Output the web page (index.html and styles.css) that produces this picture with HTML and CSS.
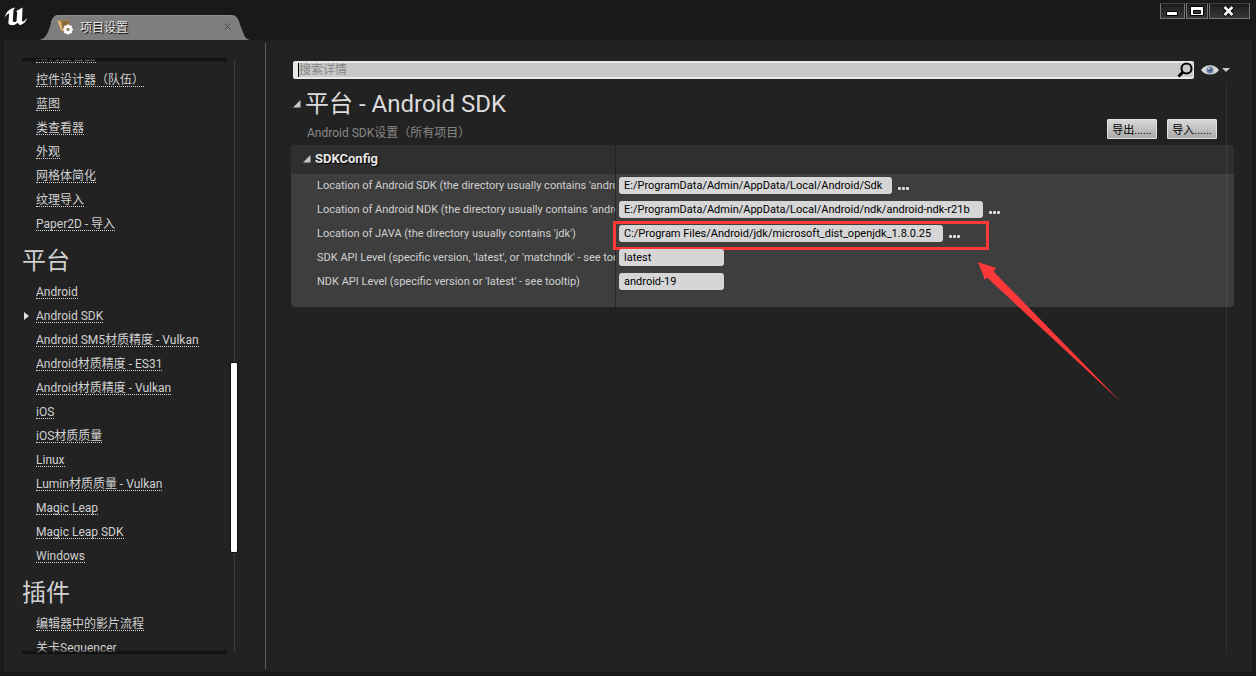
FILE: index.html
```html
<!DOCTYPE html>
<html lang="zh-CN">
<head>
    <meta charset="UTF-8">
    <meta name="viewport" content="width=device-width, initial-scale=1.0">
    <title>项目设置</title>
    <link rel="stylesheet" href="styles.css">
</head>
<body>
    <header class="titlebar">
        <svg class="logo" width="24" height="22" viewBox="0 0 24 22" aria-hidden="true">
            <path d="M0.800 11.500C1.500 6.500 5.500 2.500 11 1.500L9.500 4L8.800 14.500C8.800 16.200 10.500 16.600 12.500 15.200L13.200 6L12 5.200L18.500 1.500L18 14.500C18 15.800 18.800 15.800 19.800 15.200L23.200 12C22 15.500 20 17.800 16 19.300L13.500 16.800C11.500 18.800 9.500 20 5.500 18.800L4.300 17.200L5.200 7.500C3.500 7.800 2 9 0.800 11.500Z" fill="#fff"/>
        </svg>
        <div class="tab">
            <svg class="tab-shape" width="212" height="25" viewBox="0 0 212 25" aria-hidden="true">
                <path d="M0 25C6 24 8 20 10.500 13C13 5 14 0.500 19 0.500H192C198 0.500 199 4 202 12C205 20 206 24 211 25Z" fill="#7e7e7e"/>
                <path d="M12 8C14 3 15 0.500 19 0.500H192C197 0.500 198 3 200 8" fill="none" stroke="#8c8c8c"/>
            </svg>
            <svg class="tab-icon" width="17" height="16" viewBox="0 0 17 16" aria-hidden="true">
                <path d="M0.500 1H12L13 9L7 14L4 12Z" fill="#a9824d"/>
                <path d="M0.500 1L4 3L5.500 13L3 9Z" fill="#e0b878"/>
                <path d="M5 2H11L12 6L6 9Z" fill="#8a683b"/>
                <path d="M6 9L9 6L11 7L7 13Z" fill="#8c9a3c"/>
                <circle cx="11" cy="10.500" r="3" fill="none" stroke="#fff" stroke-width="2.500"/>
                <path d="M11 5.500V7M11 14V15.500M6 10.500H7.500M14.500 10.500H16M7.500 7L8.500 8M13.500 13L14.500 14M14.500 7L13.500 8M8.500 13L7.500 14" stroke="#fff" stroke-width="2"/>
            </svg>
            <span class="tab-title">项目设置</span>
            <button class="tab-close" type="button" aria-label="关闭标签页">
                <svg width="7" height="7" viewBox="0 0 7 7"><path d="M0.500 0.500L6.500 6.500M6.500 0.500L0.500 6.500" stroke="#4a4a4a"/></svg>
            </button>
        </div>
        <div class="window-buttons">
            <button type="button" aria-label="最小化">
                <svg width="23" height="14" viewBox="0 0 23 14"><path d="M5.500 7.500H16.500V11.500H5.500Z" fill="#fff" stroke="#000"/></svg>
            </button>
            <button type="button" aria-label="最大化">
                <svg width="20" height="14" viewBox="0 0 20 14"><path d="M3.500 2.500H16.500V11.500H3.500Z" fill="#fff" stroke="#000"/><path d="M6.500 6.500H13.500V9.500H6.500Z" fill="#333" stroke="#000"/></svg>
            </button>
            <button type="button" aria-label="关闭">
                <svg width="39" height="14" viewBox="0 0 39 14"><path d="M14 3L23 11.500M23 3L14 11.500" stroke="#000" stroke-width="4"/><path d="M14.500 3L22.500 11M22.500 3L14.500 11" stroke="#fff" stroke-width="2.500"/></svg>
            </button>
        </div>
    </header>

    <main class="window">
        <aside class="sidebar">
            <nav class="nav" aria-label="设置分类">
                <ul class="nav-list">
                    <li><a href="#">结构查看器</a></li>
                    <li><a href="#">控件设计器（队伍）</a></li>
                    <li><a href="#">蓝图</a></li>
                    <li><a href="#">类查看器</a></li>
                    <li><a href="#">外观</a></li>
                    <li><a href="#">网格体简化</a></li>
                    <li><a href="#">纹理导入</a></li>
                    <li><a href="#">Paper2D - 导入</a></li>
                </ul>
                <h2>平台</h2>
                <ul class="nav-list">
                    <li><a href="#">Android</a></li>
                    <li class="current"><a href="#" aria-current="page">Android SDK</a></li>
                    <li><a href="#">Android SM5材质精度 - Vulkan</a></li>
                    <li><a href="#">Android材质精度 - ES31</a></li>
                    <li><a href="#">Android材质精度 - Vulkan</a></li>
                    <li><a href="#">iOS</a></li>
                    <li><a href="#">iOS材质质量</a></li>
                    <li><a href="#">Linux</a></li>
                    <li><a href="#">Lumin材质质量 - Vulkan</a></li>
                    <li><a href="#">Magic Leap</a></li>
                    <li><a href="#">Magic Leap SDK</a></li>
                    <li><a href="#">Windows</a></li>
                </ul>
                <h2>插件</h2>
                <ul class="nav-list">
                    <li><a href="#">编辑器中的影片流程</a></li>
                    <li><a href="#">关卡Sequencer</a></li>
                </ul>
            </nav>
            <div class="scrollbar"><div class="thumb"></div></div>
        </aside>

        <section class="details">
            <div class="search-row">
                <div class="search-box">
                    <input type="text" placeholder="搜索详情" aria-label="搜索详情">
                    <svg width="16" height="16" viewBox="0 0 16 16" aria-hidden="true"><circle cx="9.500" cy="6.500" r="5" fill="none" stroke="#000" stroke-width="2"/><path d="M6 10L1.500 14.500" stroke="#000" stroke-width="3"/></svg>
                </div>
                <button class="view-options" type="button" aria-label="视图选项">
                    <svg width="30" height="12" viewBox="0 0 30 12">
                        <path d="M0 6C4 -0.500 14 -0.500 18 6C14 12 4 12 0 6Z" fill="#d8d8d8"/>
                        <circle cx="9" cy="6" r="3.500" fill="#6a81a6"/>
                        <circle cx="9" cy="6" r="1.500" fill="#445473"/>
                        <circle cx="8" cy="4.500" r="1" fill="#dde6f5"/>
                        <path d="M21 4H29L25 8Z" fill="#c8c8c8"/>
                    </svg>
                </button>
            </div>

            <div class="page-head">
                <div class="page-title">
                    <h1><svg width="8" height="8" viewBox="0 0 8 8" aria-hidden="true"><path d="M7.500 0V7.500H0Z" fill="#c8c8c8"/></svg>平台 - Android SDK</h1>
                    <p>Android SDK设置（所有项目）</p>
                </div>
                <div class="actions">
                    <button type="button">导出......</button>
                    <button type="button">导入......</button>
                </div>
            </div>

            <div class="panel">
                <div class="row row-head">
                    <h3><svg width="8" height="8" viewBox="0 0 8 8" aria-hidden="true"><path d="M7.500 0V7.500H0Z" fill="#c8c8c8"/></svg>SDKConfig</h3>
                    <div class="value"></div>
                </div>
                <div class="row">
                    <label for="sdk">Location of Android SDK (the directory usually contains 'android-sdk')</label>
                    <div class="value"><input id="sdk" class="path-sdk" type="text" value="E:/ProgramData/Admin/AppData/Local/Android/Sdk"><button class="browse" type="button" aria-label="浏览"><i></i><i></i><i></i></button></div>
                </div>
                <div class="row">
                    <label for="ndk">Location of Android NDK (the directory usually contains 'android-ndk')</label>
                    <div class="value"><input id="ndk" class="path-ndk" type="text" value="E:/ProgramData/Admin/AppData/Local/Android/ndk/android-ndk-r21b"><button class="browse" type="button" aria-label="浏览"><i></i><i></i><i></i></button></div>
                </div>
                <div class="row">
                    <label for="java">Location of JAVA (the directory usually contains 'jdk')</label>
                    <div class="value">
                        <input id="java" class="path-java" type="text" value="C:/Program Files/Android/jdk/microsoft_dist_openjdk_1.8.0.25"><button class="browse" type="button" aria-label="浏览"><i></i><i></i><i></i></button>
                        <div class="highlight"></div>
                        <svg class="arrow" width="144" height="142" viewBox="0 0 144 142" aria-hidden="true"><path d="M0 0L18 6L15.500 9.500L143 140L9 15.500L7 18Z" fill="#fd3838"/></svg>
                    </div>
                </div>
                <div class="row">
                    <label for="sdk-api">SDK API Level (specific version, 'latest', or 'matchndk' - see tooltip)</label>
                    <div class="value"><input id="sdk-api" type="text" value="latest"></div>
                </div>
                <div class="row">
                    <label for="ndk-api">NDK API Level (specific version or 'latest' - see tooltip)</label>
                    <div class="value"><input id="ndk-api" type="text" value="android-19"></div>
                </div>
                <div class="row row-end">
                    <span></span>
                    <div class="value"></div>
                </div>
            </div>
        </section>
    </main>
</body>
</html>
```

FILE: styles.css
```css
*,
*::before,
*::after {
    box-sizing: border-box;
}

body {
    margin: 0;
    height: 100vh;
    display: flex;
    flex-direction: column;
    background: #191919;
    color: #d0d0d0;
    font-family: Roboto, "Noto Sans CJK SC", sans-serif;
    font-size: 12px;
    overflow: hidden;
}

h1, h2, h3, p, ul {
    margin: 0;
    padding: 0;
    font-weight: normal;
}

button {
    padding: 0;
    border: 0;
    background: none;
    color: inherit;
    font: inherit;
}

svg {
    display: block;
    flex: none;
}

/* title bar */
.titlebar {
    display: flex;
    flex: none;
    height: 40px;
    padding: 0 6px 0 4px;
    background: #191919;
}

.logo {
    margin-top: 6px;
}

.tab {
    position: relative;
    display: flex;
    align-items: center;
    align-self: flex-end;
    width: 212px;
    height: 25px;
    margin-left: 11px;
    padding: 0 20px 2px 18px;
}

.tab-shape {
    position: absolute;
    left: 0;
    top: 0;
}

.tab-icon {
    position: relative;
}

.tab-title {
    position: relative;
    flex: 1;
    margin-left: 6px;
    color: #e6e6e6;
    text-shadow: 1px 1px 1px #000;
}

.tab-close {
    position: relative;
}

.window-buttons {
    display: flex;
    align-items: flex-start;
    gap: 1px;
    margin-left: auto;
    padding-top: 3px;
}

.window-buttons button {
    border: 1px solid #747474;
    border-top-color: #404040;
    background: linear-gradient(#1c1c1c, #383838);
}

/* window body */
.window {
    display: flex;
    flex: 1;
    min-height: 0;
    margin: 0 4px 4px;
    background: #222;
}

.sidebar {
    display: flex;
    flex: none;
    width: 262px;
    margin: 3px 0;
    padding: 15px 27px 15px 18px;
    border-right: 1px solid #5c5c5c;
}

.nav {
    position: relative;
    flex: 1;
    margin-right: 3px;
    overflow: hidden;
}

.nav::before,
.nav::after {
    content: "";
    position: absolute;
    left: 0;
    right: 0;
    height: 5px;
}

.nav::before {
    top: 0;
    background: linear-gradient(#0c0c0c, transparent);
}

.nav::after {
    bottom: 0;
    background: linear-gradient(transparent, #0c0c0c);
}

.nav-list {
    list-style: none;
    padding-left: 14px;
}

.nav-list:first-child {
    margin-top: -14px;
}

.nav-list li {
    display: flex;
    align-items: center;
    height: 24px;
}

.nav-list a {
    height: 14px;
    border-bottom: 1px dotted #d8d8d8;
    color: #d0d0d0;
    line-height: 15px;
    text-decoration: none;
    white-space: nowrap;
}

.nav-list .current::before {
    content: "";
    margin: 0 7px 0 -12px;
    border-left: 5px solid #e0e0e0;
    border-top: 4px solid transparent;
    border-bottom: 4px solid transparent;
}

.nav h2 {
    height: 44px;
    font-size: 24px;
    line-height: 50px;
}

.scrollbar {
    width: 8px;
    margin: 2px 0;
    padding-top: 302px;
    background: linear-gradient(#3c3c3c, #3c3c3c) 4px 0 / 1px 100% no-repeat;
}

.scrollbar .thumb {
    height: 191px;
    border: 1px solid #111;
    border-radius: 2px;
    background: #fff;
}

/* details */
.details {
    position: relative;
    flex: 1;
    min-width: 0;
    padding: 21px 18px 20px 25px;
}

.details::after {
    content: "";
    position: absolute;
    top: 44px;
    right: 25px;
    bottom: 20px;
    width: 1px;
    background: rgba(255, 255, 255, 0.07);
}

.search-row {
    display: flex;
    align-items: center;
    margin: 0 3px 0 2px;
    gap: 7px;
}

.search-box {
    display: flex;
    flex: 1;
    align-items: center;
    height: 18px;
    border: 2px solid #e8e8e8;
    border-left-width: 5px;
    border-right-width: 1px;
    border-radius: 2px;
    background: #c9c9c9;
}

.search-box input {
    flex: 1;
    height: 14px;
    padding: 0;
    border: 0;
    border-left: 1px solid #000;
    background: none;
    font: inherit;
    outline: none;
}

.search-box input::placeholder {
    color: #858585;
}

.page-head {
    display: flex;
    align-items: flex-end;
    height: 66px;
    padding-right: 17px;
}

.page-title {
    flex: 1;
    align-self: flex-start;
    padding-left: 2px;
}

.page-title h1 {
    display: flex;
    align-items: center;
    gap: 4px;
    padding-top: 8px;
    font-size: 24px;
    line-height: 34px;
    color: #dcdcdc;
}

.page-title p {
    padding-left: 14px;
    line-height: 24px;
    color: #888;
}

.actions {
    display: flex;
    gap: 10px;
    padding-bottom: 6px;
}

.actions button {
    width: 50px;
    height: 20px;
    border: 1px solid #e0e0e0;
    border-radius: 1px;
    background: linear-gradient(#d8d8d8, #aaa);
    color: #000;
    font-size: 11px;
}

.panel {
    border-radius: 4px;
    background: #3e3e3e;
    font-size: 11px;
}

.row {
    display: grid;
    grid-template-columns: 325px 1fr;
    height: 24px;
}

.row-head {
    height: 29px;
    border-radius: 4px 4px 0 0;
    background: #2f2f2f;
}

.row-head h3 {
    display: flex;
    align-items: center;
    gap: 4px;
    padding: 0 0 2px 12px;
    border-right: 1px solid #222;
    font-size: 13px;
    font-weight: bold;
    color: #e6e6e6;
    text-shadow: 1px 1px 1px #000;
}

.row label,
.row span {
    padding-left: 26px;
    border-right: 1px solid #262626;
    line-height: 23px;
    overflow: hidden;
    white-space: nowrap;
}

.row-end {
    height: 13px;
}

.value {
    position: relative;
    display: flex;
    align-items: center;
    padding: 0 0 1px 3px;
}

.value input {
    width: 105px;
    height: 17px;
    padding: 0 5px;
    border: 0;
    border-radius: 3px;
    background: #d6d6d6;
    color: #000;
    font: inherit;
}

.value .path-sdk {
    width: 273px;
}

.value .path-ndk {
    width: 364px;
}

.value .path-java {
    width: 324px;
}

.browse {
    display: flex;
    gap: 1px;
    margin-left: 6px;
    padding-top: 6px;
}

.browse i {
    width: 3px;
    height: 3px;
    border-radius: 1px;
    background: #e0e0e0;
}

/* callout over the JAVA row */
.highlight {
    position: absolute;
    left: -3px;
    top: -1px;
    width: 376px;
    height: 29px;
    border: 3px solid #fd3838;
}

.arrow {
    position: absolute;
    left: 362px;
    top: 40px;
}
```
